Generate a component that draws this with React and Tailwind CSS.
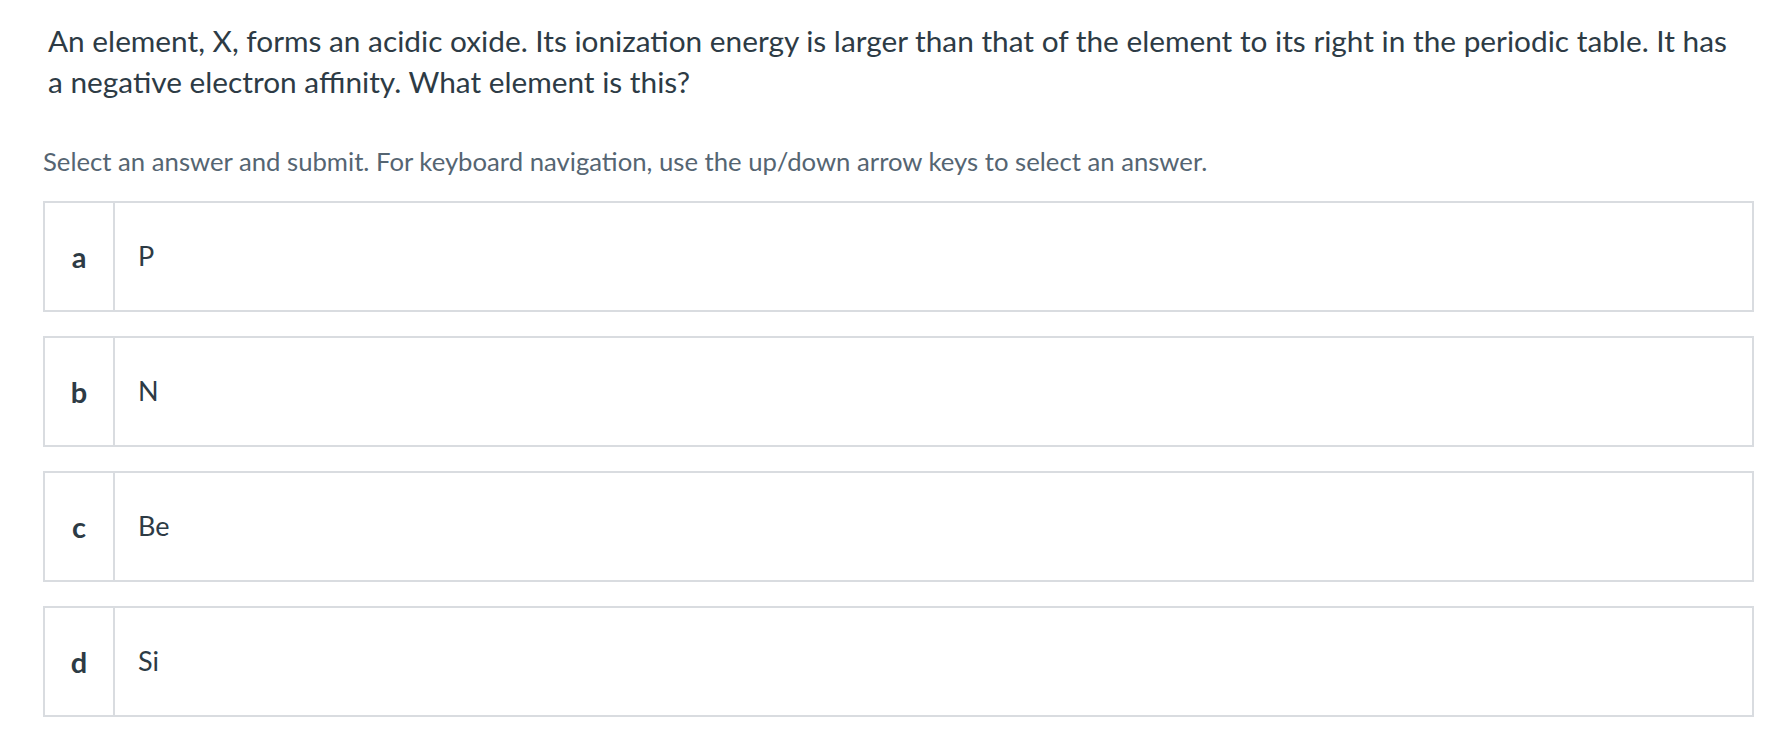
import React from 'react';

const answers = [
  { key: 'a', label: 'P' },
  { key: 'b', label: 'N' },
  { key: 'c', label: 'Be' },
  { key: 'd', label: 'Si' },
];

const AnswerRow = ({ letter, label }) => (
  <div className="flex h-[111px] border-2 border-[#d9dce0] bg-white">
    <div className="flex w-[70px] shrink-0 items-center justify-center border-r-2 border-[#d9dce0] text-[29px] font-bold text-[#2d3b45]">
      {letter}
    </div>
    <div className="flex items-center pl-[23px] text-[27px] text-[#2d3b45]">{label}</div>
  </div>
);

export default function App() {
  return (
    <div className="min-h-[740px] w-full bg-white font-['Lato','Liberation_Sans',sans-serif]">
      <div className="whitespace-nowrap pl-[48px] pt-[20px] text-[29.8px] leading-[41px] text-[#2d3b45]">
        An element, X, forms an acidic oxide. Its ionization energy is larger than that of the element to its right in the periodic table. It has
        <br />
        a negative electron affinity. What element is this?
      </div>
      <p className="mt-[42px] pl-[43px] text-[25.7px] leading-[34px] text-[#556572]">
        Select an answer and submit. For keyboard navigation, use the up/down arrow keys to select an answer.
      </p>
      <div className="ml-[43px] mr-[37px] mt-[23px] flex flex-col gap-[24px]">
        {answers.map(a => (
          <AnswerRow key={a.key} letter={a.key} label={a.label} />
        ))}
      </div>
    </div>
  );
}
